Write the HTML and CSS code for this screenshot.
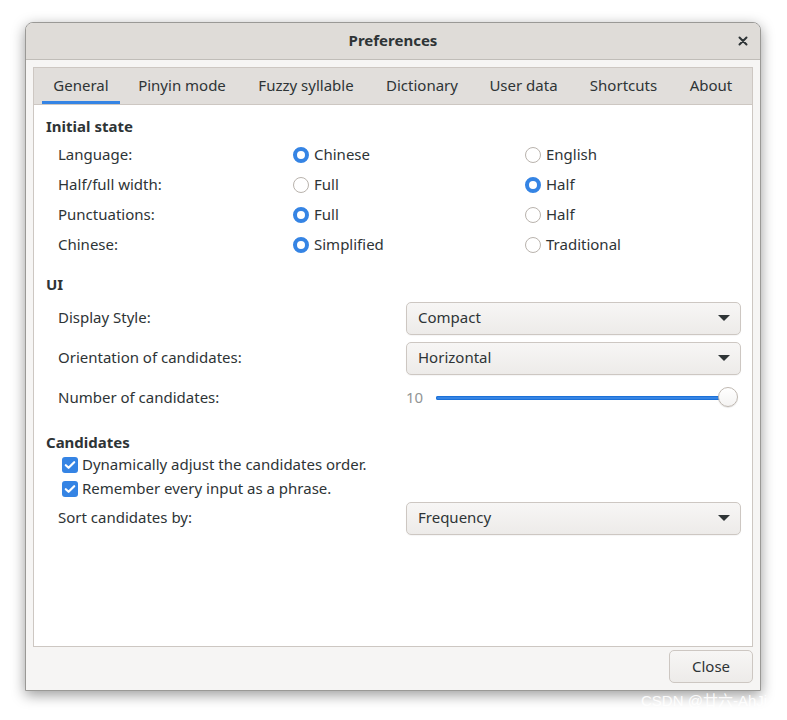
FILE: index.html
```html
<!DOCTYPE html>
<html>
<head>
<meta charset="utf-8">
<link rel="stylesheet" href="styles.css">
</head>
<body>
<div class="window">
  <div class="titlebar">
    <span class="title">Preferences</span>
    <span class="close-x">
      <svg width="10" height="10" viewBox="0 0 10 10"><path d="M1.5 1.5 L8.5 8.5 M8.5 1.5 L1.5 8.5" stroke="#2e3436" stroke-width="2" stroke-linecap="round"/></svg>
    </span>
  </div>
  <div class="body">
    <div class="notebook">
      <div class="tabs">
        <div class="tab active">General</div>
        <div class="tab">Pinyin mode</div>
        <div class="tab">Fuzzy syllable</div>
        <div class="tab">Dictionary</div>
        <div class="tab">User data</div>
        <div class="tab">Shortcuts</div>
        <div class="tab">About</div>
      </div>
      <div class="page">
        <div class="section-title">Initial state</div>
        <div class="radio-grid">
          <div class="lbl"><span class="txt">Language:</span></div>
          <div class="opt"><span class="radio on"></span><span class="txt">Chinese</span></div>
          <div class="opt"><span class="radio"></span><span class="txt">English</span></div>

          <div class="lbl"><span class="txt">Half/full width:</span></div>
          <div class="opt"><span class="radio"></span><span class="txt">Full</span></div>
          <div class="opt"><span class="radio on"></span><span class="txt">Half</span></div>

          <div class="lbl"><span class="txt">Punctuations:</span></div>
          <div class="opt"><span class="radio on"></span><span class="txt">Full</span></div>
          <div class="opt"><span class="radio"></span><span class="txt">Half</span></div>

          <div class="lbl"><span class="txt">Chinese:</span></div>
          <div class="opt"><span class="radio on"></span><span class="txt">Simplified</span></div>
          <div class="opt"><span class="radio"></span><span class="txt">Traditional</span></div>
        </div>

        <div class="section-title ui">UI</div>
        <div class="form-row">
          <div class="lbl"><span class="txt">Display Style:</span></div>
          <div class="combo"><span class="txt">Compact</span><span class="arrow"></span></div>
        </div>
        <div class="form-row">
          <div class="lbl"><span class="txt">Orientation of candidates:</span></div>
          <div class="combo"><span class="txt">Horizontal</span><span class="arrow"></span></div>
        </div>
        <div class="form-row">
          <div class="lbl"><span class="txt">Number of candidates:</span></div>
          <div class="slider">
            <span class="value txt">10</span>
            <div class="track"><div class="fill"></div><div class="knob"></div></div>
          </div>
        </div>

        <div class="section-title cand">Candidates</div>
        <div class="check-row"><span class="check"><svg width="12" height="10" viewBox="0 0 12 10"><path d="M1.8 5.2 L4.6 7.8 L10.2 2.2" fill="none" stroke="#fff" stroke-width="2.2" stroke-linecap="round" stroke-linejoin="round"/></svg></span><span class="txt">Dynamically adjust the candidates order.</span></div>
        <div class="check-row"><span class="check"><svg width="12" height="10" viewBox="0 0 12 10"><path d="M1.8 5.2 L4.6 7.8 L10.2 2.2" fill="none" stroke="#fff" stroke-width="2.2" stroke-linecap="round" stroke-linejoin="round"/></svg></span><span class="txt">Remember every input as a phrase.</span></div>
        <div class="form-row sort">
          <div class="lbl"><span class="txt">Sort candidates by:</span></div>
          <div class="combo"><span class="txt">Frequency</span><span class="arrow"></span></div>
        </div>
      </div>
    </div>
    <div class="actions">
      <div class="button"><span class="txt">Close</span></div>
    </div>
  </div>
</div>
<div class="watermark">CSDN @廿六-AhJi</div>
</body>
</html>
```
FILE: styles.css
```css
html, body {
  margin: 0;
  padding: 0;
  background: #ffffff;
}
body {
  font-family: "Noto Sans", "Open Sans", "Noto Sans CJK SC", sans-serif;
  font-size: 15px;
  color: #2e3436;
  width: 787px;
  height: 720px;
  overflow: hidden;
  position: relative;
}
.txt {
  position: relative;
  top: -1px;
}
.window {
  margin: 22px 0 0 25px;
  width: 736px;
  height: 669px;
  box-sizing: border-box;
  border: 1px solid #9a9996;
  border-radius: 8px 8px 0 0;
  background: #f6f5f4;
  box-shadow: 0 4px 14px rgba(0,0,0,0.4);
  display: flex;
  flex-direction: column;
  overflow: hidden;
}
.titlebar {
  height: 37px;
  flex: none;
  box-sizing: border-box;
  background: #dfdcd8;
  border-bottom: 1px solid #c0bdb8;
  display: flex;
  align-items: center;
  justify-content: center;
  position: relative;
  padding-bottom: 2px;
}
.title {
  font-weight: bold;
  font-size: 15px;
  color: #2e3436;
}
.close-x {
  position: absolute;
  right: 12px;
  top: 13px;
  width: 10px;
  height: 10px;
  display: flex;
}
.body {
  flex: 1;
  display: flex;
  flex-direction: column;
  padding: 7px;
}
.notebook {
  height: 580px;
  box-sizing: border-box;
  border: 1px solid #cdc7c2;
  display: flex;
  flex-direction: column;
  background: #ffffff;
}
.tabs {
  height: 37px;
  flex: none;
  box-sizing: border-box;
  background: #e1dedb;
  border-bottom: 1px solid #cdc7c2;
  display: flex;
  padding-left: 8px;
}
.tab {
  display: flex;
  align-items: center;
  justify-content: center;
  color: #2e3436;
  box-sizing: border-box;
  height: 36px;
  padding-bottom: 2px;
}
.tab:nth-child(1) { width: 78px; }
.tab:nth-child(2) { width: 124px; }
.tab:nth-child(3) { width: 124px; }
.tab:nth-child(4) { width: 108px; }
.tab:nth-child(5) { width: 95px; }
.tab:nth-child(6) { width: 105px; }
.tab:nth-child(7) { width: 70px; }
.tab.active {
  border-bottom: 3px solid #3584e4;
  padding-bottom: 0;
  padding-top: 1px;
}
.page {
  flex: 1;
  padding: 12px 11px 0 12px;
  display: flex;
  flex-direction: column;
}
.section-title {
  font-weight: bold;
  height: 20px;
  line-height: 19px;
}
.section-title.ui { margin-top: 15px; }
.section-title.cand { margin-top: 15px; }
.radio-grid {
  margin-top: 3px;
  padding-left: 12px;
  display: grid;
  grid-template-columns: 235px 232px 1fr;
  grid-auto-rows: 30px;
}
.lbl {
  display: flex;
  align-items: center;
}
.opt {
  display: flex;
  align-items: center;
}
.radio {
  width: 14px;
  height: 14px;
  border-radius: 50%;
  border: 1px solid #b9b3ad;
  background: #ffffff;
  margin-right: 5px;
  box-sizing: content-box;
  flex: none;
}
.radio.on {
  width: 8px;
  height: 8px;
  border: 4px solid #3584e4;
  background: #ffffff;
}
.form-row {
  display: grid;
  grid-template-columns: 348px 1fr;
  padding-left: 12px;
  height: 40px;
  align-items: center;
}
.section-title.ui + .form-row { margin-top: 3px; }
.combo {
  height: 33px;
  box-sizing: border-box;
  border: 1px solid #cdc7c2;
  border-radius: 5px;
  background: linear-gradient(#f7f6f5, #edebe9);
  display: flex;
  align-items: center;
  justify-content: space-between;
  padding: 0 8px 0 11px;
  box-shadow: 0 1px 1px rgba(0,0,0,0.04);
}
.arrow {
  width: 0;
  height: 0;
  border-left: 6px solid transparent;
  border-right: 6px solid transparent;
  border-top: 6px solid #2e3436;
  margin-right: 2px;
}
.slider {
  display: flex;
  align-items: center;
  height: 33px;
}
.slider .value {
  color: #929595;
  width: 30px;
}
.track {
  flex: 1;
  position: relative;
  height: 4px;
  margin-right: 3px;
}
.fill {
  position: absolute;
  left: 0;
  right: 8px;
  top: 0;
  height: 4px;
  background: #3584e4;
  border-radius: 2px;
  box-shadow: inset 0 0 0 1px #1c71d8;
}
.knob {
  position: absolute;
  right: 0;
  top: -9px;
  width: 20px;
  height: 20px;
  box-sizing: border-box;
  border-radius: 50%;
  border: 1px solid #bfb8b1;
  background: linear-gradient(#ffffff, #f4f3f2);
  box-shadow: 0 1px 1px rgba(0,0,0,0.1);
}
.check-row {
  height: 24px;
  display: flex;
  align-items: center;
  padding-left: 16px;
}
.check {
  width: 16px;
  height: 16px;
  border-radius: 3px;
  background: #3584e4;
  display: flex;
  align-items: center;
  justify-content: center;
  margin-right: 4px;
  flex: none;
}
.form-row.sort { height: 34px; }
.actions {
  display: flex;
  justify-content: flex-end;
  padding-top: 3px;
}
.button {
  width: 84px;
  height: 33px;
  box-sizing: border-box;
  border: 1px solid #cdc7c2;
  border-radius: 5px;
  background: linear-gradient(#f7f6f5, #edebe9);
  display: flex;
  align-items: center;
  justify-content: center;
}
.watermark {
  position: absolute;
  left: 641px;
  top: 689px;
  font-family: "Liberation Sans", "Noto Sans CJK SC", sans-serif;
  font-size: 15px;
  color: rgba(255,255,255,0.9);
  white-space: nowrap;
}
```
